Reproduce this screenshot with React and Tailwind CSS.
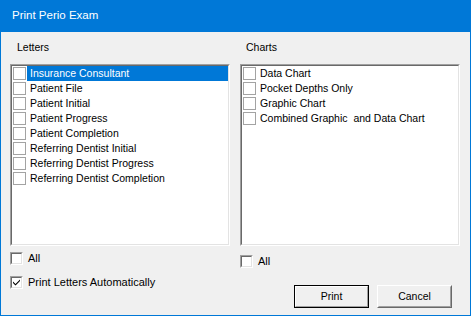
import { useState } from "react"

const LETTERS = [
    "Insurance Consultant",
    "Patient File",
    "Patient Initial",
    "Patient Progress",
    "Patient Completion",
    "Referring Dentist Initial",
    "Referring Dentist Progress",
    "Referring Dentist Completion",
]

const CHARTS = ["Data Chart", "Pocket Depths Only", "Graphic Chart", "Combined Graphic  and Data Chart"]

// check glyph used by the 3d checkboxes
function Tick() {
    return (
        <svg width="9" height="9" viewBox="0 0 9 9" className="block">
            <path d="M1 3.5 L3.5 6 L8 1.5 L8 3 L3.5 7.5 L1 5 Z" fill="#000" />
        </svg>
    )
}

// classic sunken checkbox with label (All, Print Letters Automatically)
function Check({ label, checked, onChange }) {
    return (
        <label className="flex items-center gap-[5px] h-[13px] cursor-default select-none" onClick={onChange}>
            <span className="w-[13px] h-[13px] border border-t-[#a0a0a0] border-l-[#a0a0a0] border-r-white border-b-white">
                <span className="w-[11px] h-[11px] flex items-center justify-center bg-white border border-t-[#696969] border-l-[#696969] border-r-[#e3e3e3] border-b-[#e3e3e3]">
                    {checked && <Tick />}
                </span>
            </span>
            <span className="text-[11px] text-black leading-none">{label}</span>
        </label>
    )
}

// checklist inside a sunken listbox
function CheckList({ items, selected, onSelect }) {
    return (
        <div className="h-[182px] border border-t-[#a0a0a0] border-l-[#a0a0a0] border-r-white border-b-white">
            <div className="h-full bg-white border border-t-[#696969] border-l-[#696969] border-r-[#e3e3e3] border-b-[#e3e3e3]">
                {items.map((item, i) => (
                    <div key={item} className="flex items-center h-[15px]" onClick={() => onSelect(i)}>
                        <span className="ml-[1px] w-[13px] h-[13px] bg-white border border-[#a3a3a3]" />
                        <span
                            className={
                                i === selected
                                    ? "ml-[1px] flex-1 h-[15px] flex items-center pl-[3px] bg-[#0078d7] text-white text-[10.5px] whitespace-pre"
                                    : "ml-[1px] flex-1 h-[15px] flex items-center pl-[3px] text-black text-[10.5px] whitespace-pre"
                            }
                        >
                            {item}
                        </span>
                    </div>
                ))}
            </div>
        </div>
    )
}

export default function App() {
    const [letterSel, setLetterSel] = useState(0)
    const [chartSel, setChartSel] = useState(-1)
    const [allLetters, setAllLetters] = useState(false)
    const [allCharts, setAllCharts] = useState(false)
    const [autoPrint, setAutoPrint] = useState(true)

    return (
        <div className="w-[471px] h-[316px] bg-[#0078d7] px-[1px] pb-[1px] flex flex-col font-['Liberation_Sans',Arial,sans-serif]">
            {/* title bar */}
            <div className="h-[32px] flex items-center pl-[11px] text-white text-[11.5px]">Print Perio Exam</div>

            {/* body */}
            <div className="flex-1 bg-[#f0f0f0] flex px-[9px] gap-[10px]">
                <div className="w-[220px] flex flex-col">
                    <div className="h-[32px] flex items-center pl-[7px] text-[10.5px] text-black">Letters</div>
                    <CheckList items={LETTERS} selected={letterSel} onSelect={setLetterSel} />
                    <div className="mt-[6px]">
                        <Check label="All" checked={allLetters} onChange={() => setAllLetters(!allLetters)} />
                    </div>
                    <div className="mt-[11px]">
                        <Check label="Print Letters Automatically" checked={autoPrint} onChange={() => setAutoPrint(!autoPrint)} />
                    </div>
                </div>

                <div className="w-[220px] flex flex-col">
                    <div className="h-[32px] flex items-center pl-[6px] text-[10.5px] text-black">Charts</div>
                    <CheckList items={CHARTS} selected={chartSel} onSelect={setChartSel} />
                    <div className="mt-[9px]">
                        <Check label="All" checked={allCharts} onChange={() => setAllCharts(!allCharts)} />
                    </div>
                    <div className="mt-[17px] flex justify-end gap-[8px] pr-[8px]">
                        <button className="w-[75px] h-[23px] border border-black bg-[#f0f0f0] text-[10.5px] text-black">
                            <span className="flex items-center justify-center w-full h-full border border-t-white border-l-white border-r-[#a0a0a0] border-b-[#a0a0a0]">Print</span>
                        </button>
                        <button className="w-[75px] h-[23px] border border-t-white border-l-white border-r-[#696969] border-b-[#696969] bg-[#f0f0f0] text-[10.5px] text-black">
                            <span className="flex items-center justify-center w-full h-full border border-t-[#f0f0f0] border-l-[#f0f0f0] border-r-[#a0a0a0] border-b-[#a0a0a0]">Cancel</span>
                        </button>
                    </div>
                </div>
            </div>
        </div>
    )
}
